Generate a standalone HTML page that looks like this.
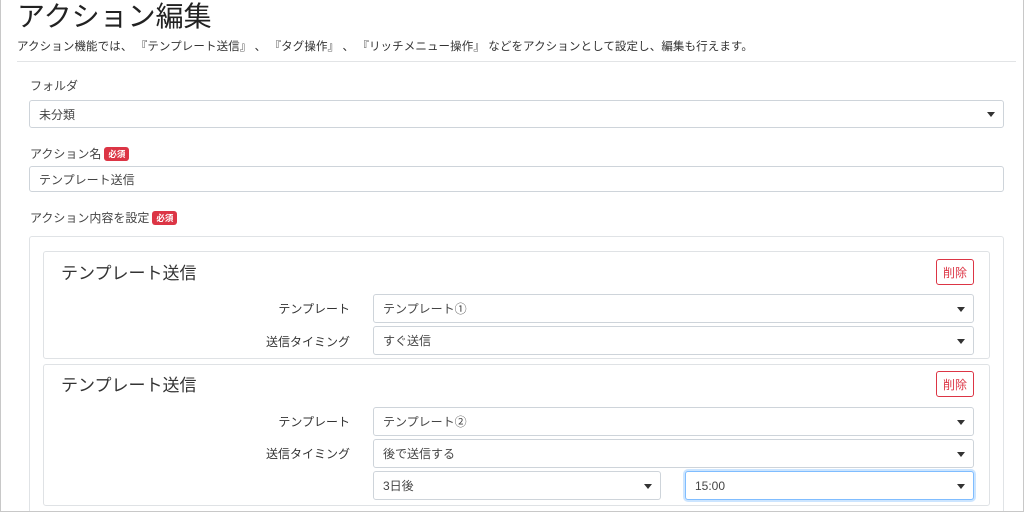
<!DOCTYPE html>
<html><head><meta charset="utf-8"><style>
*{box-sizing:border-box;margin:0;padding:0}
html,body{width:1024px;height:512px;overflow:hidden}
body{background:#fff;font-family:"Liberation Sans","Noto Sans CJK JP",sans-serif;color:#212529;position:relative}
.frame{position:absolute;left:0;top:0;width:1024px;height:512px;border:1px solid #c8c8c8;border-top:none}
.a{position:absolute}
h1{position:absolute;left:17px;top:0px;font-size:28px;font-weight:400;line-height:34px;color:#222}
.sub{left:17px;top:38px;font-size:11.5px;color:#333;letter-spacing:0.1px;white-space:nowrap}
.hr{left:17px;top:61px;width:999px;height:1px;background:#e2e4e6}
.lbl{font-size:12px;color:#444}
.ctl{position:absolute;border:1px solid #ced4da;border-radius:3px;background:#fff;font-size:12px;color:#444;padding-left:9px;display:flex;align-items:center}
.ctl.s::after{content:"";position:absolute;right:8px;top:50%;margin-top:-2px;border-left:4px solid transparent;border-right:4px solid transparent;border-top:5px solid #333}
.badge{display:inline-block;background:#dc3545;color:#fff;font-size:8.5px;font-weight:bold;padding:1px 4px;border-radius:3px;vertical-align:1px;margin-left:3px}
.panel{left:29px;top:236px;width:975px;height:300px;border:1px solid #e0e3e6;border-radius:3px}
.card{position:absolute;left:43px;width:947px;border:1px solid #dfe2e5;border-radius:3px}
.ct{position:absolute;left:17px;font-size:17px;color:#333}
.del{position:absolute;left:892px;width:38px;height:26px;border:1px solid #dc3545;border-radius:3px;color:#dc3545;font-size:12px;display:flex;align-items:center;justify-content:center}
.rl{position:absolute;width:306px;text-align:right;font-size:12px;color:#333}
</style></head><body>
<h1>アクション編集</h1>
<div class="a sub">アクション機能では、 『テンプレート送信』 、 『タグ操作』 、 『リッチメニュー操作』 などをアクションとして設定し、編集も行えます。</div>
<div class="a hr"></div>
<div class="a lbl" style="left:30px;top:77px">フォルダ</div>
<div class="ctl s" style="left:29px;top:100px;width:975px;height:28px">未分類</div>
<div class="a lbl" style="left:30px;top:145px">アクション名<span class="badge">必須</span></div>
<div class="ctl" style="left:29px;top:166px;width:975px;height:26px">テンプレート送信</div>
<div class="a lbl" style="left:30px;top:209px">アクション内容を設定<span class="badge">必須</span></div>
<div class="a panel"></div>
<div class="card" style="top:251px;height:108px">
 <div class="ct" style="top:7px">テンプレート送信</div>
 <div class="del" style="top:7px">削除</div>
 <div class="rl" style="top:48px">テンプレート</div>
 <div class="ctl s" style="left:329px;top:42px;width:601px;height:29px">テンプレート①</div>
 <div class="rl" style="top:81px">送信タイミング</div>
 <div class="ctl s" style="left:329px;top:74px;width:601px;height:29px">すぐ送信</div>
</div>
<div class="card" style="top:364px;height:142px">
 <div class="ct" style="top:6px">テンプレート送信</div>
 <div class="del" style="top:6px">削除</div>
 <div class="rl" style="top:48px">テンプレート</div>
 <div class="ctl s" style="left:329px;top:42px;width:601px;height:29px">テンプレート②</div>
 <div class="rl" style="top:80px">送信タイミング</div>
 <div class="ctl s" style="left:329px;top:74px;width:601px;height:29px">後で送信する</div>
 <div class="ctl s" style="left:329px;top:106px;width:288px;height:29px">3日後</div>
 <div class="ctl s" style="left:641px;top:106px;width:289px;height:29px;border-color:#80bdff;box-shadow:0 0 0 2px rgba(0,123,255,.2)">15:00</div>
</div>
<div class="frame"></div>
</body></html>
